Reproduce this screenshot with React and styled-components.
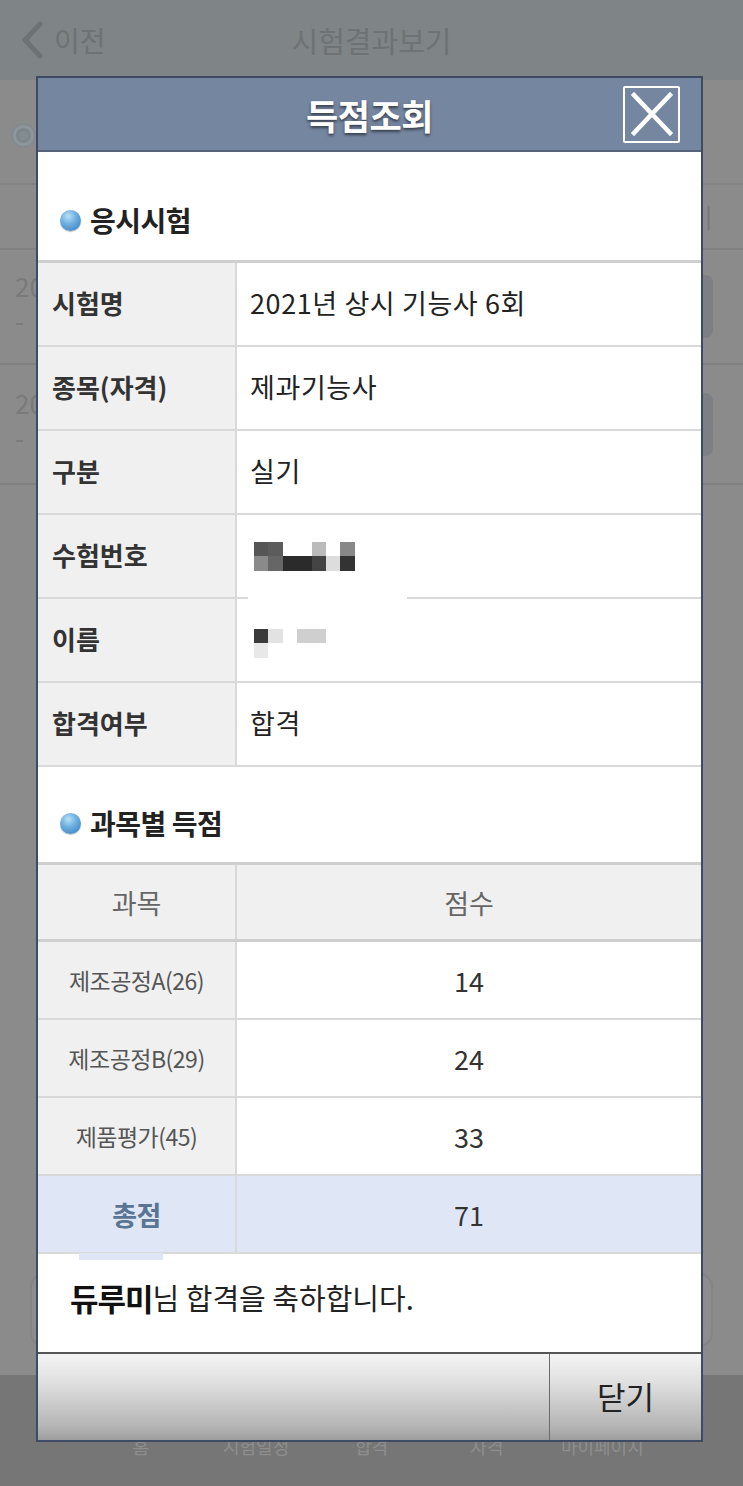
import React from 'react';
import styled, { createGlobalStyle } from 'styled-components';

const Global = createGlobalStyle`
  html, body { margin: 0; padding: 0; }
  body { font-family: "Noto Sans CJK KR", "Noto Sans", sans-serif; }
  * { box-sizing: border-box; }
`;

const Screen = styled.div`
  position: relative;
  width: 743px;
  height: 1486px;
  overflow: hidden;
  background: #8b8b8b;
  display: flex;
  flex-direction: column;
`;

const TopBar = styled.header`
  height: 80px;
  flex: none;
  background: #7f8486;
  display: grid;
  grid-template-columns: 1fr auto 1fr;
  align-items: center;
  color: #6d7274;
`;

const Back = styled.div`
  display: flex;
  align-items: center;
  gap: 10px;
  padding-left: 20px;
  font-size: 28px;
`;

const TopTitle = styled.div`
  font-size: 29px;
`;

const ListRow = styled.div`
  height: ${(p) => p.$h}px;
  flex: none;
  border-bottom: 2px solid #818181;
  display: flex;
  align-items: center;
  justify-content: ${(p) => p.$justify || 'space-between'};
  padding: 0 30px 0 ${(p) => p.$pl || 14}px;
  color: #7a7a7a;
  font-size: 26px;
`;

const Radio = styled.div`
  width: 25px;
  height: 25px;
  margin-top: 8px;
  border-radius: 50%;
  background: radial-gradient(circle, #858c90 0 4px, #7c878d 5px 7px, #8d969a 8px);
  border: 2px solid #838a8e;
`;

const DateText = styled.div`
  display: flex;
  flex-direction: column;
  gap: 4px;
  line-height: 30px;
  margin-top: -8px;
`;

const RowButton = styled.div`
  width: 80px;
  height: 63px;
  border-radius: 8px;
  background: #7e7e85;
`;

const Filler = styled.div`
  flex: 1;
  display: flex;
  flex-direction: column;
  justify-content: flex-end;
  padding: 0 30px 28px 30px;
`;

const BgCard = styled.div`
  height: 74px;
  border: 2px solid #848484;
  border-radius: 14px;
  background: #8d8d8d;
`;

const TabBar = styled.nav`
  height: 111px;
  flex: none;
  background: #767676;
  display: grid;
  grid-template-columns: repeat(5, 1fr);
  padding: 58px 83px 0;
  color: #8e8e8e;
  font-size: 18px;
`;

const Tab = styled.div`
  text-align: center;
  white-space: nowrap;
`;

const Modal = styled.section`
  position: absolute;
  left: 36px;
  top: 76px;
  width: 667px;
  height: 1366px;
  border: 2px solid #3e4b64;
  background: #fff;
  display: flex;
  flex-direction: column;
`;

const ModalHeader = styled.div`
  height: 74px;
  flex: none;
  background: #7586a0;
  border-bottom: 2px solid #55637b;
  display: grid;
  grid-template-columns: 1fr auto 1fr;
  align-items: center;
`;

const ModalTitle = styled.h1`
  grid-column: 2;
  margin: 0;
  color: #fff;
  font-size: 35px;
  font-weight: 700;
  letter-spacing: -0.5px;
  text-shadow: 0 2px 3px rgba(0, 0, 0, 0.55);
`;

const CloseBox = styled.button`
  justify-self: end;
  margin-right: 21px;
  width: 57px;
  height: 57px;
  padding: 0;
  border: 2px solid #fff;
  border-radius: 2px;
  background: transparent;
  display: flex;
  align-items: center;
  justify-content: center;
`;

const SectionHead = styled.div`
  height: ${(p) => p.$h}px;
  flex: none;
  padding: ${(p) => p.$pt}px 0 0 22px;
  display: flex;
  align-items: flex-start;
`;

const HeadInner = styled.div`
  height: ${(p) => p.$ih}px;
  display: flex;
  align-items: center;
  gap: 9px;
  font-size: 28px;
  font-weight: 700;
  color: #222;
  letter-spacing: -0.5px;
`;

const Dot = styled.span`
  width: 21px;
  height: 21px;
  border-radius: 50%;
  background: radial-gradient(circle at 40% 30%, #b9e0f7 0%, #6fb0e0 40%, #2f78bb 100%);
  box-shadow: 0 1px 1px rgba(0, 0, 0, 0.25);
`;

const Table = styled.div`
  flex: none;
  border-top: 3px solid #cfcfcf;
`;

const InfoRow = styled.div`
  height: 84px;
  display: grid;
  grid-template-columns: 199px 1fr;
  border-bottom: 2px solid #d9d9d9;
`;

const InfoLabel = styled.div`
  background: #f0f0f0;
  border-right: 2px solid #d9d9d9;
  padding: 0 0 4px 14px;
  display: flex;
  align-items: center;
  font-size: 26px;
  font-weight: 700;
  color: #333;
`;

const InfoValue = styled.div`
  position: relative;
  padding: 0 0 4px 13px;
  display: flex;
  align-items: center;
  font-size: 27px;
  color: #222;
  letter-spacing: 0.6px;
`;

const Mosaic = styled.div`
  margin: ${(p) => p.$m};
  display: grid;
  grid-template-columns: repeat(${(p) => p.$cols}, 14.4px);
  grid-auto-rows: 14.5px;
`;

const Cell = styled.div`
  background: ${(p) => p.$c || 'transparent'};
`;

const LinePatch = styled.div`
  position: absolute;
  left: 11px;
  bottom: -2px;
  width: 159px;
  height: 2px;
  background: #fff;
`;

const ScoreHead = styled.div`
  height: 77px;
  display: grid;
  grid-template-columns: 199px 1fr;
  background: #f0f0f0;
  border-bottom: 3px solid #cfcfcf;
`;

const HeadCell = styled.div`
  display: flex;
  align-items: center;
  justify-content: center;
  font-size: 27px;
  color: #666;
  border-right: ${(p) => (p.$first ? '2px solid #d9d9d9' : 'none')};
`;

const ScoreRow = styled.div`
  height: 78px;
  display: grid;
  grid-template-columns: 199px 1fr;
  border-bottom: 2px solid #d9d9d9;
  background: ${(p) => (p.$total ? '#dfe7f7' : '#fff')};
`;

const ScoreLabel = styled.div`
  position: relative;
  background: ${(p) => (p.$total ? '#dfe7f7' : '#f0f0f0')};
  border-right: 2px solid #d9d9d9;
  display: flex;
  align-items: center;
  justify-content: center;
  font-size: ${(p) => (p.$total ? 27 : 23)}px;
  font-weight: ${(p) => (p.$total ? 700 : 400)};
  color: ${(p) => (p.$total ? '#5a7494' : '#555')};
  letter-spacing: -0.5px;
`;

const ScoreValue = styled.div`
  display: flex;
  align-items: center;
  justify-content: center;
  font-size: 27px;
  color: #333;
`;

const BluePatch = styled.div`
  position: absolute;
  left: 41px;
  bottom: -8px;
  width: 84px;
  height: 7px;
  background: #dfe7f7;
`;

const Message = styled.div`
  height: 98px;
  flex: none;
  padding: 0 0 12px 32px;
  display: flex;
  align-items: center;
  font-size: 29px;
  color: #222;
`;

const Name = styled.b`
  font-size: 31px;
  font-weight: 700;
  color: #111;
  letter-spacing: -1px;
`;

const ButtonBar = styled.div`
  height: 88px;
  flex: none;
  border-top: 2px solid #555;
  display: grid;
  grid-template-columns: 1fr 152px;
`;

const BarButton = styled.button`
  border: none;
  border-left: ${(p) => (p.$divider ? '1px solid #6a6a6a' : 'none')};
  padding: 0 0 4px 0;
  background: linear-gradient(#f4f4f4 0%, #dedede 35%, #b4b4b4 85%, #9d9d9d 100%);
  font-family: inherit;
  font-size: 31px;
  color: #222;
`;

const idMosaic = [
  '#555', '#5c5c5c', null, null, '#bbb', null, '#888',
  '#8a8a8a', '#666', '#2b2b2b', '#2b2b2b', '#444', '#ddd', '#333',
];
const nameMosaic = [
  '#3a3a3a', '#e2e2e2', null, '#cfcfcf', '#cfcfcf',
  '#e8e8e8', null, null, null, null,
];

const scores = [
  ['제조공정A(26)', '14'],
  ['제조공정B(29)', '24'],
  ['제품평가(45)', '33'],
];

export default function App() {
  return (
    <>
      <Global />
      <Screen>
        <TopBar>
          <Back>
            <svg width="24" height="38" viewBox="0 0 24 38">
              <polyline points="20,3 5,19 20,35" fill="none" stroke="#6d7274" strokeWidth="5" strokeLinecap="round" strokeLinejoin="round" />
            </svg>
            이전
          </Back>
          <TopTitle>시험결과보기</TopTitle>
          <div />
        </TopBar>
        <ListRow $h={105} $pl={11}>
          <Radio />
        </ListRow>
        <ListRow $h={65} $justify="flex-end">
          결과보기
        </ListRow>
        <ListRow $h={115} $pl={15}>
          <DateText>
            <span>20</span>
            <span>-</span>
          </DateText>
          <RowButton />
        </ListRow>
        <ListRow $h={120} $pl={15}>
          <DateText>
            <span>20</span>
            <span>-</span>
          </DateText>
          <RowButton />
        </ListRow>
        <Filler>
          <BgCard />
        </Filler>
        <TabBar>
          <Tab>홈</Tab>
          <Tab>시험일정</Tab>
          <Tab>합격</Tab>
          <Tab>자격</Tab>
          <Tab>마이페이지</Tab>
        </TabBar>

        <Modal>
          <ModalHeader>
            <ModalTitle>득점조회</ModalTitle>
            <CloseBox aria-label="닫기">
              <svg width="44" height="44" viewBox="0 0 44 44">
                <path d="M4 3 L40 41 M40 3 L4 41" stroke="#fff" strokeWidth="4.5" strokeLinecap="square" />
              </svg>
            </CloseBox>
          </ModalHeader>

          <SectionHead $h={108} $pt={28}>
            <HeadInner $ih={80}>
              <Dot />
              응시시험
            </HeadInner>
          </SectionHead>

          <Table>
            <InfoRow>
              <InfoLabel>시험명</InfoLabel>
              <InfoValue>2021년 상시 기능사 6회</InfoValue>
            </InfoRow>
            <InfoRow>
              <InfoLabel>종목(자격)</InfoLabel>
              <InfoValue>제과기능사</InfoValue>
            </InfoRow>
            <InfoRow>
              <InfoLabel>구분</InfoLabel>
              <InfoValue>실기</InfoValue>
            </InfoRow>
            <InfoRow>
              <InfoLabel>수험번호</InfoLabel>
              <InfoValue>
                <Mosaic $cols={7} $m="4px 0 0 4px">
                  {idMosaic.map((c, i) => (
                    <Cell key={i} $c={c} />
                  ))}
                </Mosaic>
                <LinePatch />
              </InfoValue>
            </InfoRow>
            <InfoRow>
              <InfoLabel>이름</InfoLabel>
              <InfoValue>
                <Mosaic $cols={5} $m="10px 0 0 4px">
                  {nameMosaic.map((c, i) => (
                    <Cell key={i} $c={c} />
                  ))}
                </Mosaic>
              </InfoValue>
            </InfoRow>
            <InfoRow>
              <InfoLabel>합격여부</InfoLabel>
              <InfoValue>합격</InfoValue>
            </InfoRow>
          </Table>

          <SectionHead $h={95} $pt={17}>
            <HeadInner $ih={78}>
              <Dot />
              과목별 득점
            </HeadInner>
          </SectionHead>

          <Table>
            <ScoreHead>
              <HeadCell $first>과목</HeadCell>
              <HeadCell>점수</HeadCell>
            </ScoreHead>
            {scores.map(([name, value]) => (
              <ScoreRow key={name}>
                <ScoreLabel>{name}</ScoreLabel>
                <ScoreValue>{value}</ScoreValue>
              </ScoreRow>
            ))}
            <ScoreRow $total>
              <ScoreLabel $total>
                총점
                <BluePatch />
              </ScoreLabel>
              <ScoreValue>71</ScoreValue>
            </ScoreRow>
          </Table>

          <Message>
            <Name>듀루미</Name>님 합격을 축하합니다.
          </Message>

          <ButtonBar>
            <BarButton />
            <BarButton $divider>닫기</BarButton>
          </ButtonBar>
        </Modal>
      </Screen>
    </>
  );
}
